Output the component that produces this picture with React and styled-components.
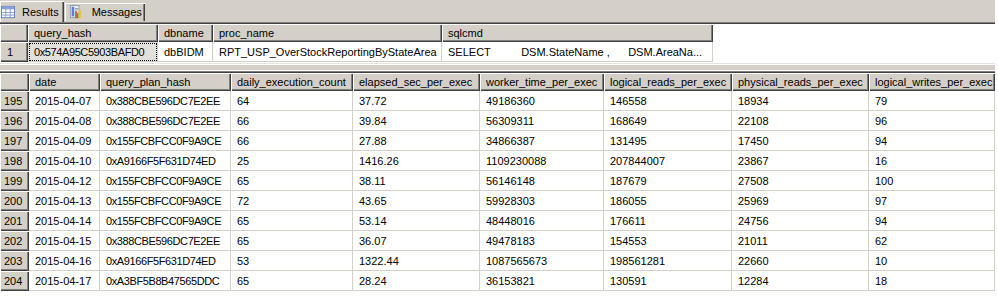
import styled, { createGlobalStyle } from 'styled-components'

const GlobalStyle = createGlobalStyle`
    html, body { margin: 0; padding: 0; background: #fff; }
    body {
        font-family: "Liberation Sans", Arial, sans-serif;
        font-size: 11px;
        color: #000;
    }
`

const gray = '#d4d0c8'

const Window = styled.div`
    width: 998px;
    height: 296px;
    display: flex;
    flex-direction: column;
    background: #fff;
    overflow: hidden;
`

const TabStrip = styled.div`
    height: 22px;
    flex: none;
    display: flex;
    align-items: flex-end;
    background: ${gray};
    margin-right: 3px;
`

const Tab = styled.div`
    display: flex;
    align-items: center;
    gap: ${ ({ $active }) => $active ? '7px' : '9px' };
    height: ${ ({ $active }) => $active ? '21px' : '18px' };
    padding: ${ ({ $active }) => $active ? '0 5px 0 1px' : '0 3px 0 4px' };
    margin-bottom: ${ ({ $active }) => $active ? '0' : '1px' };
    margin-left: ${ ({ $active }) => $active ? '0' : '1px' };
    box-shadow: inset 1px 1px 0 #fff, inset -1px 0 0 #404040, inset -2px 0 0 #808080;
    font-size: 11px;
    svg { flex: none; }
`

const Pane = styled.div`
    flex: none;
    background: #fff;
    box-shadow: inset 0 1px 0 #808080, inset 0 2px 0 #404040;
    padding-top: 2px;
    height: ${ ({ $height }) => $height }px;
    margin-right: 3px;
    overflow: hidden;
`

const Splitter = styled.div`
    flex: none;
    height: 7px;
    background: ${gray};
    border-top: 1px solid #e6e4de;
    box-shadow: inset 0 1px 0 #fff, inset 0 -1px 0 #fff;
    margin-right: 3px;
`

const Grid = styled.table`
    table-layout: fixed;
    border-collapse: separate;
    border-spacing: 0;
    width: ${ ({ $width }) => $width }px;
`

const HeadCell = styled.th`
    height: 18px;
    padding: 0 6px;
    text-align: left;
    font-weight: normal;
    background: ${gray};
    box-shadow: inset 1px 1px 0 #fff, inset -1px -1px 0 #404040, inset -2px -2px 0 #808080;
    white-space: nowrap;
    overflow: hidden;
`

const RowNum = styled.th`
    height: 19px;
    padding: 0 0 0 ${ ({ $pad }) => $pad }px;
    text-align: left;
    font-weight: normal;
    background: ${gray};
    box-shadow: inset 1px 1px 0 #fff, inset -1px -1px 0 #404040, inset -2px -2px 0 #808080;
`

const Cell = styled.td`
    height: 19px;
    padding: 0 6px;
    border-right: 1px solid ${gray};
    border-bottom: 1px solid ${gray};
    white-space: nowrap;
    overflow: hidden;
    letter-spacing: ${ ({ $tight }) => $tight ? '-0.4px' : 'normal' };
    background: ${ ({ $selected }) => $selected ? '#e2e0db' : '#fff' };
    outline: ${ ({ $selected }) => $selected ? '1px dotted #000' : 'none' };
    outline-offset: -2px;
`

const Pre = styled.span`
    white-space: pre;
`

const GridIcon = () => (
    <svg width="14" height="14" viewBox="0 0 16 16">
        <rect x="0.5" y="1.5" width="15" height="13" fill="#fff" stroke="#5a78b8" />
        <rect x="1" y="2" width="14" height="3" fill="#8aa6dc" />
        <path d="M1 8.5h14M1 11.5h14M5.5 2v12M10.5 2v12" stroke="#7b93c9" />
    </svg>
)

const MessagesIcon = () => (
    <svg width="14" height="14" viewBox="0 0 16 16">
        <rect x="1.5" y="0.5" width="10" height="14" fill="#eef0f4" stroke="#8d96a8" />
        <rect x="3" y="2" width="3" height="11" fill="#5b7fcf" />
        <rect x="7" y="7" width="2" height="8" fill="#e0453c" />
        <rect x="9" y="9" width="2" height="6" fill="#3fae4a" />
        <rect x="11" y="6" width="3" height="9" fill="#f0c23a" />
        <path d="M7 4h4M7 5.5h3" stroke="#8d96a8" />
    </svg>
)

const topCols = [28, 130, 55, 229, 271]
const topHead = ['', 'query_hash', 'dbname', 'proc_name', 'sqlcmd']

const cols = [29, 71, 131, 122, 127, 124, 128, 137, 126]
const head = ['', 'date', 'query_plan_hash', 'daily_execution_count', 'elapsed_sec_per_exec',
    'worker_time_per_exec', 'logical_reads_per_exec', 'physical_reads_per_exec', 'logical_writes_per_exec']

const rows = [
    [195, '2015-04-07', '0x388CBE596DC7E2EE', '64', '37.72', '49186360', '146558', '18934', '79'],
    [196, '2015-04-08', '0x388CBE596DC7E2EE', '66', '39.84', '56309311', '168649', '22108', '96'],
    [197, '2015-04-09', '0x155FCBFCC0F9A9CE', '66', '27.88', '34866387', '131495', '17450', '94'],
    [198, '2015-04-10', '0xA9166F5F631D74ED', '25', '1416.26', '1109230088', '207844007', '23867', '16'],
    [199, '2015-04-12', '0x155FCBFCC0F9A9CE', '65', '38.11', '56146148', '187679', '27508', '100'],
    [200, '2015-04-13', '0x155FCBFCC0F9A9CE', '72', '43.65', '59928303', '186055', '25969', '97'],
    [201, '2015-04-14', '0x155FCBFCC0F9A9CE', '65', '53.14', '48448016', '176611', '24756', '94'],
    [202, '2015-04-15', '0x388CBE596DC7E2EE', '65', '36.07', '49478183', '154553', '21011', '62'],
    [203, '2015-04-16', '0xA9166F5F631D74ED', '53', '1322.44', '1087565673', '198561281', '22660', '10'],
    [204, '2015-04-17', '0xA3BF5B8B47565DDC', '65', '28.24', '36153821', '130591', '12284', '18'],
]

const sum = (a) => a.reduce((s, v) => s + v, 0)

const App = () => {
    return (
        <Window>
            <GlobalStyle />
            <TabStrip>
                <Tab $active>
                    <GridIcon />
                    Results
                </Tab>
                <Tab>
                    <MessagesIcon />
                    Messages
                </Tab>
            </TabStrip>

            <Pane $height={39}>
                <Grid $width={sum(topCols)}>
                    <colgroup>
                        {topCols.map((w, i) => <col key={i} style={{ width: w }} />)}
                    </colgroup>
                    <thead>
                        <tr>
                            {topHead.map((h, i) => <HeadCell key={i}>{h}</HeadCell>)}
                        </tr>
                    </thead>
                    <tbody>
                        <tr>
                            <RowNum $pad={7}>1</RowNum>
                            <Cell $selected $tight>0x574A95C5903BAFD0</Cell>
                            <Cell>dbBIDM</Cell>
                            <Cell>RPT_USP_OverStockReportingByStateArea</Cell>
                            <Cell><Pre>SELECT          DSM.StateName ,      DSM.AreaNa...</Pre></Cell>
                        </tr>
                    </tbody>
                </Grid>
            </Pane>

            <Splitter />

            <Pane $height={226}>
                <Grid $width={sum(cols)}>
                    <colgroup>
                        {cols.map((w, i) => <col key={i} style={{ width: w }} />)}
                    </colgroup>
                    <thead>
                        <tr>
                            {head.map((h, i) => <HeadCell key={i}>{h}</HeadCell>)}
                        </tr>
                    </thead>
                    <tbody>
                        {rows.map(([n, ...vals]) => (
                            <tr key={n}>
                                <RowNum $pad={4}>{n}</RowNum>
                                {vals.map((v, i) => <Cell key={i} $tight={i === 1}>{v}</Cell>)}
                            </tr>
                        ))}
                    </tbody>
                </Grid>
            </Pane>
        </Window>
    )
}

export default App
